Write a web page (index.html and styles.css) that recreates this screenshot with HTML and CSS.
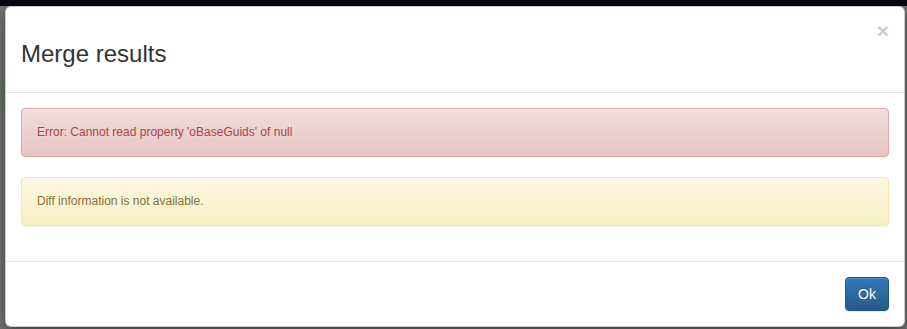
FILE: index.html
```html
<!DOCTYPE html>
<html>
<head>
<meta charset="utf-8">
<title>Merge results</title>
<link rel="stylesheet" href="styles.css">
</head>
<body>
<div class="backdrop">
  <div class="topbar"></div>
  <div class="left-col"><div class="left-green"></div></div>
  <div class="modal">
    <div class="modal-header">
      <h4 class="modal-title">Merge results</h4>
      <button class="close" type="button">&times;</button>
    </div>
    <div class="modal-body">
      <div class="alert alert-danger">Error: Cannot read property 'oBaseGuids' of null</div>
      <div class="alert alert-warning">Diff information is not available.</div>
    </div>
    <div class="modal-footer">
      <button class="btn btn-primary" type="button">Ok</button>
    </div>
  </div>
  <div class="right-col"></div>
</div>
</body>
</html>
```

FILE: styles.css
```css
* { box-sizing: border-box; }
html, body { margin: 0; padding: 0; }
body {
  background: #777777;
  font-family: "Liberation Sans", Arial, Helvetica, sans-serif;
  font-size: 12px;
  line-height: 1.42857;
  color: #333;
  width: 907px;
  height: 329px;
  overflow: hidden;
}
.backdrop {
  display: grid;
  grid-template-columns: 5px 900px 2px;
  grid-template-rows: 6px auto;
}
.topbar {
  grid-column: 1 / 4;
  grid-row: 1;
  background: #050812;
}
.left-col { grid-column: 1; grid-row: 2; }
.left-green {
  margin-top: 66px;
  height: 38px;
  background: #6c7867;
}
.right-col { grid-column: 3; grid-row: 2; }
.modal {
  grid-column: 2;
  grid-row: 1 / 3;
  margin-top: 6px;
  background: #fff;
  border: 1px solid rgba(0,0,0,.2);
  border-radius: 6px;
  box-shadow: 0 5px 15px rgba(0,0,0,.5);
  position: relative;
  z-index: 1;
}
.modal-header {
  display: flex;
  justify-content: space-between;
  align-items: flex-start;
  padding: 15px;
  border-bottom: 1px solid #e5e5e5;
}
.modal-title {
  margin: 18px 0 10px;
  font-size: 24px;
  font-weight: 500;
  line-height: 27px;
  color: #333;
}
.close {
  margin-top: -2px;
  padding: 0;
  border: 0;
  background: transparent;
  font-family: "Liberation Sans", Arial, sans-serif;
  font-size: 21px;
  font-weight: bold;
  line-height: 1;
  color: #000;
  opacity: .2;
  text-shadow: 0 1px 0 #fff;
  cursor: pointer;
}
.modal-body { padding: 15px; }
.alert {
  padding: 15px;
  margin-bottom: 20px;
  border: 1px solid transparent;
  border-radius: 4px;
  line-height: 17px;
  text-shadow: 0 1px 0 rgba(255,255,255,.2);
  box-shadow: inset 0 1px 0 rgba(255,255,255,.25), 0 1px 2px rgba(0,0,0,.05);
}
.alert-danger {
  color: #a94442;
  background-image: linear-gradient(to bottom, #f2dede 0, #e7c3c3 100%);
  border-color: #dca7a7;
}
.alert-warning {
  color: #8a6d3b;
  background-image: linear-gradient(to bottom, #fcf8e3 0, #f8efc0 100%);
  border-color: #f5e79e;
}
.modal-footer {
  display: flex;
  justify-content: flex-end;
  padding: 15px;
  border-top: 1px solid #e5e5e5;
}
.btn {
  display: inline-block;
  padding: 6px 12px;
  font-family: "Liberation Sans", Arial, sans-serif;
  font-size: 14px;
  line-height: 20px;
  border: 1px solid transparent;
  border-radius: 4px;
  cursor: pointer;
}
.btn-primary {
  color: #fff;
  background-image: linear-gradient(to bottom, #337ab7 0, #265a88 100%);
  border-color: #245580;
  text-shadow: 0 -1px 0 rgba(0,0,0,.2);
  box-shadow: inset 0 1px 0 rgba(255,255,255,.15), 0 1px 1px rgba(0,0,0,.075);
}
```
